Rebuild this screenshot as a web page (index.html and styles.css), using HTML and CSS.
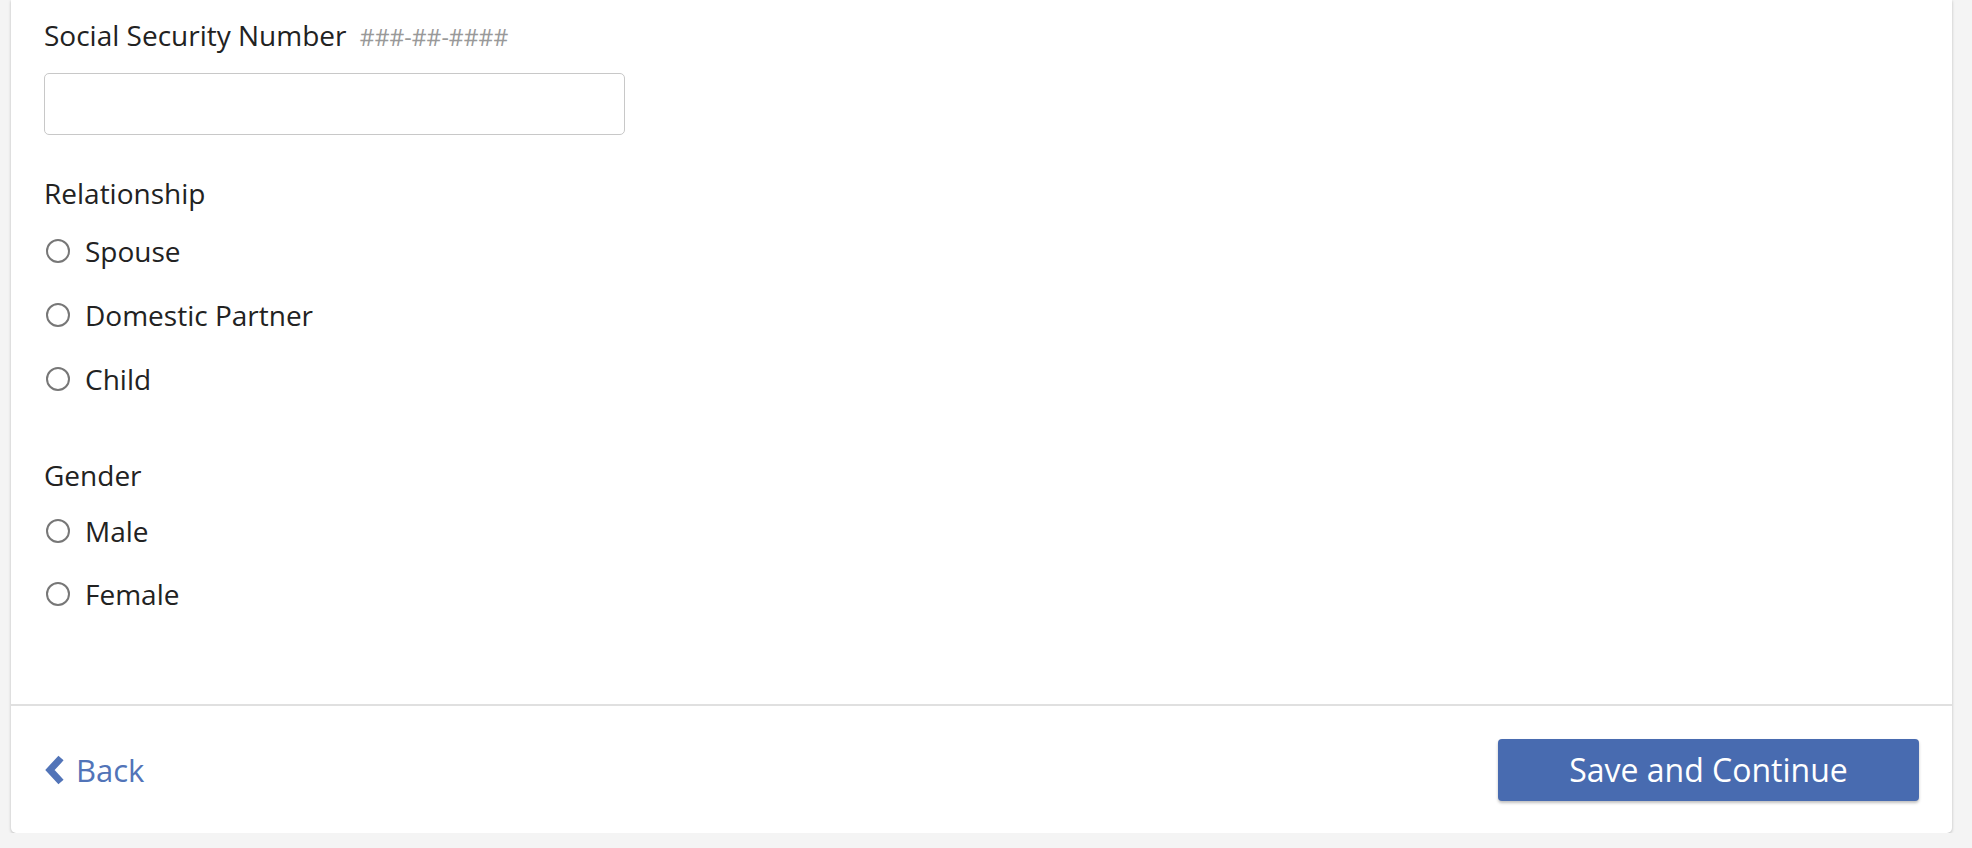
FILE: index.html
```html
<!DOCTYPE html>
<html>
<head>
<meta charset="utf-8">
<link rel="stylesheet" href="styles.css">
</head>
<body>
<div class="card">
  <div class="form-body">
    <div class="field">
      <div class="label">Social Security Number <span class="hint">###-##-####</span></div>
      <input class="text-input" type="text">
    </div>
    <div class="group">
      <div class="label">Relationship</div>
      <label class="radio-row"><span class="radio"></span><span>Spouse</span></label>
      <label class="radio-row"><span class="radio"></span><span>Domestic Partner</span></label>
      <label class="radio-row"><span class="radio"></span><span>Child</span></label>
    </div>
    <div class="group gender">
      <div class="label">Gender</div>
      <label class="radio-row"><span class="radio"></span><span>Male</span></label>
      <label class="radio-row"><span class="radio"></span><span>Female</span></label>
    </div>
  </div>
  <div class="footer">
    <a class="back" href="#"><svg class="chev" viewBox="0 0 22 30" width="22" height="30"><path d="M17 3 L6 15 L17 27" fill="none" stroke="currentColor" stroke-width="7" stroke-linejoin="miter" stroke-linecap="butt"/></svg>Back</a>
    <button class="primary">Save and Continue</button>
  </div>
</div>
</body>
</html>
```
FILE: styles.css
```css
html, body {
  margin: 0;
  padding: 0;
  background: #f4f4f4;
  font-family: "Open Sans", "Noto Sans", sans-serif;
  color: #222;
}
.card {
  margin-left: 11px;
  width: 1941px;
  height: 833px;
  background: #fff;
  border-radius: 0 0 5px 5px;
  box-shadow: 0 1px 3px rgba(0,0,0,0.25);
  display: flex;
  flex-direction: column;
  box-sizing: border-box;
}
.form-body {
  flex: 1;
  padding: 16px 33px 0 33px;
}
.label {
  font-size: 28px;
  line-height: 38px;
  color: #222;
}
.hint {
  font-size: 23px;
  color: #999;
  margin-left: 6px;
}
.text-input {
  display: block;
  margin-top: 17px;
  width: 581px;
  height: 62px;
  box-sizing: border-box;
  border: 1.5px solid #c8c8c8;
  border-radius: 5px;
  font-size: 24px;
  padding: 0 12px;
  outline: none;
}
.group {
  margin-top: 39px;
}
.group .label {
  margin-bottom: 7px;
}
.gender {
  margin-top: 45px;
}
.gender .label {
  margin-bottom: 5px;
}
.radio-row {
  display: flex;
  align-items: center;
  height: 64px;
  font-size: 28px;
  color: #222;
}
.gender .radio-row {
  height: 63px;
}
.radio {
  width: 24px;
  height: 24px;
  box-sizing: border-box;
  border: 2px solid #777;
  border-radius: 50%;
  margin-left: 2px;
  margin-right: 15px;
  flex: none;
}
.footer {
  border-top: 2px solid #e0e0e0;
  height: 129px;
  box-sizing: border-box;
  display: flex;
  align-items: center;
  justify-content: space-between;
  padding: 0 33px 0 33px;
}
.back {
  color: #5274b8;
  text-decoration: none;
  font-size: 31px;
  display: flex;
  align-items: center;
  gap: 10px;
}
.chev {
  display: block;
}
.primary {
  width: 421px;
  height: 62px;
  background: #486bb0;
  color: #fff;
  border: none;
  border-radius: 4px;
  font-family: "Open Sans", "Noto Sans", sans-serif;
  font-size: 32px;
  box-shadow: 0 2px 3px rgba(0,0,0,0.25);
}
```
